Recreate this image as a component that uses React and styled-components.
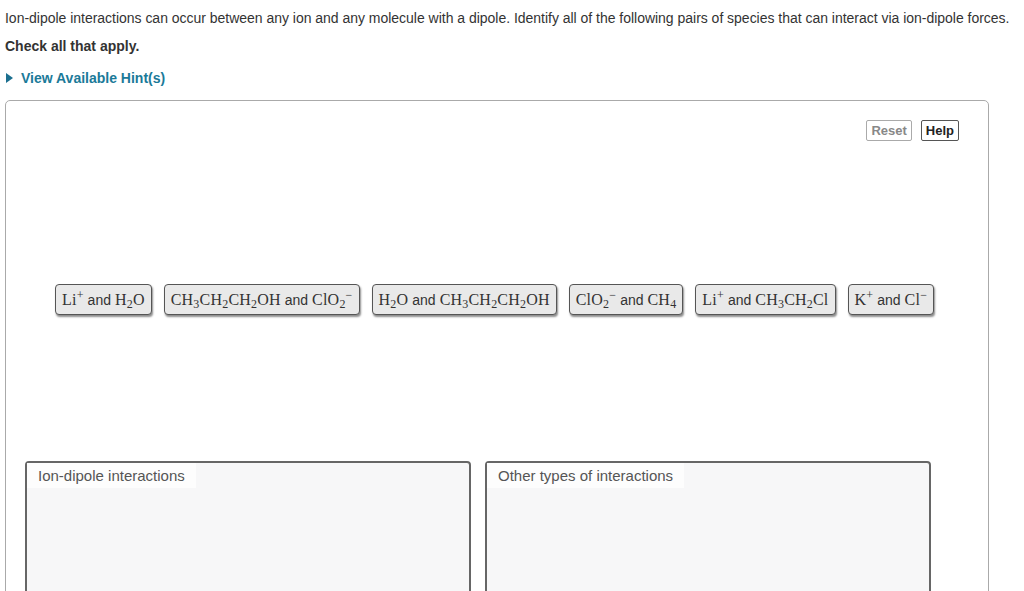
import React from 'react';
import styled, { createGlobalStyle } from 'styled-components';

const Global = createGlobalStyle`
  html, body {
    margin: 0;
    padding: 0;
    background: #fff;
    overflow: hidden;
  }
  body {
    font-family: 'Liberation Sans', Arial, sans-serif;
    color: #333;
  }
`;

const Page = styled.div`
  padding: 9px 5px 0 5px;
  width: 1024px;
  box-sizing: border-box;
  height: 591px;
  overflow: hidden;
`;

const Prompt = styled.p`
  margin: 0;
  font-size: 14px;
  line-height: 18px;
  letter-spacing: -0.02px;
  color: #333;
  white-space: nowrap;
`;

const Instruction = styled.p`
  margin: 10px 0 0 0;
  font-size: 14px;
  line-height: 18px;
  font-weight: bold;
  color: #333;
`;

const HintToggle = styled.div`
  margin-top: 14px;
  display: flex;
  align-items: center;
  gap: 8px;
  font-size: 14px;
  line-height: 18px;
  font-weight: bold;
  color: #1b7a99;
`;

const Arrow = styled.span`
  width: 0;
  height: 0;
  border-top: 5px solid transparent;
  border-bottom: 5px solid transparent;
  border-left: 7px solid #1b6f8f;
  margin-left: 1px;
`;

const Workspace = styled.div`
  margin-top: 13px;
  width: 984px;
  height: 520px;
  box-sizing: border-box;
  border: 1px solid #aaa;
  border-radius: 5px;
  background: #fff;
  display: flex;
  flex-direction: column;
`;

const Toolbar = styled.div`
  display: flex;
  justify-content: flex-end;
  gap: 9px;
  padding: 19px 29px 0 0;
`;

const ToolButton = styled.button`
  font-family: 'Liberation Sans', Arial, sans-serif;
  font-size: 13px;
  font-weight: bold;
  line-height: 15px;
  padding: 2px 4px;
  background: #fff;
  border: 1px solid ${p => (p.$muted ? '#aaa' : '#555')};
  color: ${p => (p.$muted ? '#888' : '#222')};
  border-radius: 2px;
  cursor: pointer;
`;

const TileRow = styled.div`
  display: flex;
  gap: 12px;
  padding: 143px 0 0 49px;
`;

const Tile = styled.div`
  box-sizing: border-box;
  height: 31px;
  padding: 0 6px;
  display: flex;
  align-items: center;
  white-space: nowrap;
  background: #e9e9e9;
  border: 1px solid #555;
  border-radius: 4px;
  box-shadow: 1px 2px 2px rgba(0, 0, 0, 0.45);
`;

const Formula = styled.span`
  font-family: 'Liberation Serif', 'Times New Roman', serif;
  font-size: 16px;
  color: #333;
  letter-spacing: 0.2px;

  sub, sup {
    font-size: 12px;
    line-height: 0;
  }
  sub {
    vertical-align: -3px;
  }
  sup {
    vertical-align: 6px;
  }
`;

const And = styled.span`
  font-family: 'Liberation Sans', Arial, sans-serif;
  font-size: 14px;
  color: #333;
  margin: 0 4px;
`;

const Zones = styled.div`
  display: flex;
  gap: 14px;
  padding: 146px 0 0 19px;
`;

const Zone = styled.div`
  box-sizing: border-box;
  width: 446px;
  height: 200px;
  background: #f7f7f8;
  border: 2px solid #666;
  border-radius: 4px;
`;

const ZoneLabel = styled.div`
  display: inline-block;
  background: #fdfdfd;
  padding: 4px 11px 4px 11px;
  font-size: 15px;
  line-height: 17px;
  color: #555;
`;

const pairs = [
  [<>Li<sup>+</sup></>, <>H<sub>2</sub>O</>],
  [<>CH<sub>3</sub>CH<sub>2</sub>CH<sub>2</sub>OH</>, <>ClO<sub>2</sub><sup>−</sup></>],
  [<>H<sub>2</sub>O</>, <>CH<sub>3</sub>CH<sub>2</sub>CH<sub>2</sub>OH</>],
  [<>ClO<sub>2</sub><sup>−</sup></>, <>CH<sub>4</sub></>],
  [<>Li<sup>+</sup></>, <>CH<sub>3</sub>CH<sub>2</sub>Cl</>],
  [<>K<sup>+</sup></>, <>Cl<sup>−</sup></>],
];

export default function App() {
  return (
    <>
      <Global />
      <Page>
        <Prompt>
          Ion-dipole interactions can occur between any ion and any molecule with a dipole. Identify all of the following pairs of species that can interact via ion-dipole forces.
        </Prompt>
        <Instruction>Check all that apply.</Instruction>
        <HintToggle>
          <Arrow />
          View Available Hint(s)
        </HintToggle>
        <Workspace>
          <Toolbar>
            <ToolButton $muted>Reset</ToolButton>
            <ToolButton>Help</ToolButton>
          </Toolbar>
          <TileRow>
            {pairs.map(([a, b], i) => (
              <Tile key={i}>
                <Formula>{a}</Formula>
                <And>and</And>
                <Formula>{b}</Formula>
              </Tile>
            ))}
          </TileRow>
          <Zones>
            <Zone>
              <ZoneLabel>Ion-dipole interactions</ZoneLabel>
            </Zone>
            <Zone>
              <ZoneLabel>Other types of interactions</ZoneLabel>
            </Zone>
          </Zones>
        </Workspace>
      </Page>
    </>
  );
}
